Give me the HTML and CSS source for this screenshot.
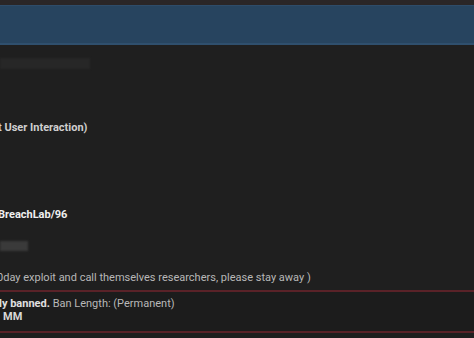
FILE: index.html
```html
<!DOCTYPE html>
<html lang="en">
<head>
  <meta charset="UTF-8">
  <meta name="viewport" content="width=device-width, initial-scale=1.0">
  <title>Profile</title>
  <link rel="stylesheet" href="styles.css">
</head>
<body>
  <div class="topbar"></div>
  <div class="banner"></div>
  <div class="content">
    <div class="placeholder-line"></div>
    <h2 class="section-title">t User Interaction)</h2>
    <div class="user-name">BreachLab/96</div>
    <div class="placeholder-tag"></div>
    <p class="bio">0day exploit and call themselves researchers, please stay away )</p>
  </div>
  <div class="ban-box">
    <div class="ban-line"><b>ly banned.</b> Ban Length: (Permanent)</div>
    <div class="ban-line ban-by">MM</div>
  </div>
</body>
</html>
```

FILE: styles.css
```css
body {
  margin: 0;
  background-color: #1f1f1f;
  font-family: Roboto, "Noto Sans", sans-serif;
  color: #d0d0d0;
  height: 338px;
  overflow: hidden;
}
.topbar {
  height: 5px;
  background-color: #2a2627;
}
.banner {
  height: 37px;
  background-color: #27445f;
  border-top: 1px solid #2e4c69;
  border-bottom: 2px solid #2f4f6d;
}
.content {
  display: flex;
  flex-direction: column;
  align-items: flex-start;
}
.placeholder-line {
  margin-top: 13px;
  width: 90px;
  height: 11px;
  background-color: #272727;
  filter: blur(1px);
}
.section-title {
  margin: 52px 0 0 -2px;
  font-size: 11px;
  font-weight: bold;
  color: #cfcfcf;
  line-height: 14px;
}
.user-name {
  margin: 72px 0 0 -2px;
  font-size: 11px;
  font-weight: bold;
  color: #f0f0f0;
  line-height: 16px;
}
.placeholder-tag {
  margin-top: 18px;
  width: 28px;
  height: 10px;
  background-color: #3a3a3a;
  filter: blur(1px);
}
.bio {
  margin: 20px 0 0 -3px;
  font-size: 11px;
  line-height: 14px;
  color: #b8b8b8;
}
.ban-box {
  margin-top: 5px;
  border-top: 2px solid #5a2228;
  border-bottom: 2px solid #5a2228;
  background-color: #1c1c1c;
  padding: 5px 0 8px;
}
.ban-line {
  font-size: 11px;
  line-height: 13px;
  color: #b8b8b8;
  margin-left: -1px;
}
.ban-line b {
  color: #e0e0e0;
}
.ban-by {
  margin-left: 3px;
  font-weight: bold;
  color: #d8d8d8;
}
```
